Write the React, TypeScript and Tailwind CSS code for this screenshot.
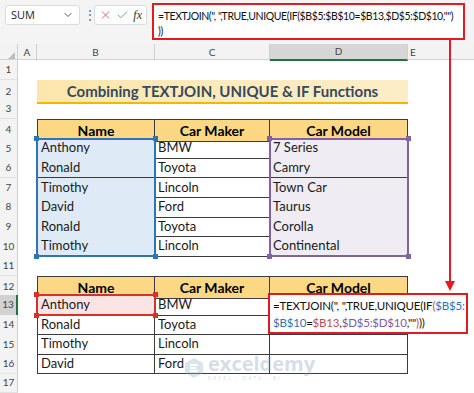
import { ChevronDown, X, Check } from "lucide-react";

const cols = "grid grid-cols-[18px_19px_118px_115px_138px_1fr]";
const cellFont = { fontFamily: "Lato, 'Open Sans', sans-serif" };

const table1 = [
  ["Anthony", "BMW", "7 Series"],
  ["Ronald", "Toyota", "Camry"],
  ["Timothy", "Lincoln", "Town Car"],
  ["David", "Ford", "Taurus"],
  ["Ronald", "Toyota", "Corolla"],
  ["Timothy", "Lincoln", "Continental"],
];

const table2 = [
  ["Anthony", "BMW"],
  ["Ronald", "Toyota"],
  ["Timothy", "Lincoln"],
  ["David", "Ford"],
];

const RowNum = ({ n, active }: { n: number; active?: boolean }) => (
  <div
    className={
      "flex items-center justify-center border-b border-[#e2e2e2] text-[10px] text-[#444] " +
      (active ? "bg-[#d2d2d2] border-r-2 border-r-[#217346]" : "bg-[#f3f3f3] border-r border-r-[#d0d0d0]")
    }
  >
    {n}
  </div>
);

const Handle = ({ cls, color }: { cls: string; color: string }) => (
  <div className={"absolute w-[5px] h-[5px] " + cls} style={{ background: color }} />
);

const Selection = ({ color, cls }: { color: string; cls: string }) => (
  <div className={"absolute pointer-events-none border-2 " + cls} style={{ borderColor: color }}>
    <Handle cls="-left-[4px] -top-[4px]" color={color} />
    <Handle cls="-right-[4px] -top-[4px]" color={color} />
    <Handle cls="-left-[4px] -bottom-[4px]" color={color} />
    <Handle cls="-right-[4px] -bottom-[4px]" color={color} />
  </div>
);

const HeaderRow = ({ n }: { n: number }) => (
  <div className={cols + " h-[19.6px]"}>
    <RowNum n={n} />
    <div />
    <div className="flex items-center justify-center bg-[#fcd884] border border-[#3b3b3b] text-[14px] font-bold text-black">Name</div>
    <div className="flex items-center justify-center bg-[#fcd884] border-y border-r border-[#3b3b3b] text-[14px] font-bold text-black">Car Maker</div>
    <div className="flex items-center justify-center bg-[#fcd884] border-y border-r border-[#3b3b3b] text-[14px] font-bold text-black">Car Model</div>
    <div />
  </div>
);

const EmptyRow = ({ n }: { n: number }) => (
  <div className={cols + " h-[19.6px]"}>
    <RowNum n={n} />
  </div>
);

export default function App() {
  return (
    <div className="w-[474px] h-[393px] overflow-hidden bg-white relative" style={cellFont}>
      {/* formula bar */}
      <div className="h-[44px] bg-[#f4f4f4] flex items-start pt-[3px] pl-[5px] gap-[4px]" style={{ fontFamily: "'Open Sans', 'Noto Sans', sans-serif" }}>
        <div className="mt-[2px] w-[75px] h-[20px] bg-white border border-[#dcdcdc] rounded-[3px] flex items-center justify-between px-[5px]">
          <span className="text-[11px] text-[#222]">SUM</span>
          <ChevronDown size={12} className="text-[#555]" />
        </div>
        <div className="mt-[6px] text-[12px] leading-none text-[#666] w-[6px] text-center">⋮</div>
        <div className="mt-[2px] w-[53px] h-[20px] bg-white border border-[#dcdcdc] rounded-[3px] flex items-center gap-[4px] px-[4px]">
          <X size={14} strokeWidth={1.5} className="text-[#e04848]" />
          <Check size={14} strokeWidth={1.5} className="text-[#3aa35a]" />
          <span className="text-[12px] italic text-[#333]" style={{ fontFamily: "'Liberation Serif', serif" }}>fx</span>
        </div>
        <div className="ml-[1px] w-[313px] h-[37px] bg-white border-2 border-[#e01b24] pl-[4px] pt-[4px] text-[10.5px] tracking-[-0.4px] leading-[15px] text-[#111] whitespace-nowrap overflow-hidden" style={{ fontFamily: "Lato, sans-serif" }}>
          <div>=TEXTJOIN(", ",TRUE,UNIQUE(IF($B$5:$B$10=$B13,$D$5:$D$10,"")</div>
          <div>))</div>
        </div>
      </div>

      {/* column headers */}
      <div className={cols + " h-[16px] bg-[#f3f3f3] border-b border-[#d0d0d0] text-[10px] text-[#444]"}>
        <div className="flex items-end justify-end pr-[2px] pb-[2px] border-r border-[#d0d0d0]">
          <div className="w-0 h-0 border-l-[7px] border-l-transparent border-b-[7px] border-b-[#bdbdbd]" />
        </div>
        <div className="flex items-center justify-center border-r border-[#d0d0d0]">A</div>
        <div className="flex items-center justify-center border-r border-[#d0d0d0]">B</div>
        <div className="flex items-center justify-center border-r border-[#d0d0d0]">C</div>
        <div className="flex items-center justify-center bg-[#d6d6d6] border-b-2 border-[#217346] border-r border-r-[#d0d0d0]">D</div>
        <div className="flex items-center pl-[2px]">E</div>
      </div>

      <div className="relative">
        <EmptyRow n={1} />
        <div className={cols + " h-[19.6px]"}>
          <RowNum n={2} />
          <div />
          <div className="col-span-3 flex items-center justify-center bg-gradient-to-r from-[#fde6aa] via-[#fdebbd] to-[#fdedc6] border-b-2 border-[#f2b800] text-[15px] font-bold text-[#36495d]">
            Combining TEXTJOIN, UNIQUE &amp; IF Functions
          </div>
        </div>
        <EmptyRow n={3} />
        <HeaderRow n={4} />
        {table1.map((r, i) => (
          <div key={i} className={cols + " h-[19.6px] text-[13px] text-[#1a1a1a]"}>
            <RowNum n={5 + i} />
            <div />
            <div className="flex items-center pl-[3px] bg-[#deebf7] border-x border-b border-[#3b3b3b]">{r[0]}</div>
            <div className="flex items-center pl-[3px] border-r border-b border-[#3b3b3b]">{r[1]}</div>
            <div className="flex items-center pl-[3px] bg-[#efecf4] border-r border-b border-[#3b3b3b]">{r[2]}</div>
            <div />
          </div>
        ))}
        <EmptyRow n={11} />
        <HeaderRow n={12} />
        {table2.map((r, i) => (
          <div key={i} className={cols + " h-[19.6px] text-[13px] text-[#1a1a1a]"}>
            <RowNum n={13 + i} active={i === 0} />
            <div />
            <div className={"flex items-center pl-[3px] border-x border-b border-[#3b3b3b] " + (i === 0 ? "bg-[#fbe4e4]" : "")}>{r[0]}</div>
            <div className="flex items-center pl-[3px] border-r border-b border-[#3b3b3b]">{r[1]}</div>
            <div className="border-r border-b border-[#3b3b3b]" />
            <div />
          </div>
        ))}
        <EmptyRow n={17} />

        {/* selections */}
        <Selection color="#2e75b6" cls="left-[36px] top-[77.5px] w-[120px] h-[119.5px]" />
        <Selection color="#8064a2" cls="left-[269px] top-[77.5px] w-[140px] h-[119.5px]" />
        <Selection color="#d9302c" cls="left-[36px] top-[234px] w-[120px] h-[21.6px]" />

        {/* formula in D13 */}
        <div className="absolute left-[268px] top-[233px] w-[200px] h-[41px] bg-white border-2 border-[#e01b24] pl-[3px] pt-[2px] text-[11.5px] tracking-[-0.2px] leading-[17px] text-[#111] whitespace-nowrap overflow-hidden">
          <div>
            =TEXTJOIN(", ",TRUE,UNIQUE(IF<span className="text-[#c0504d]">(</span>
            <span className="text-[#2e75b6]">$B$5:</span>
          </div>
          <div>
            <span className="text-[#2e75b6]">$B$10</span>=<span className="text-[#c0504d]">$B13</span>,<span className="text-[#7a5ca8]">$D$5:$D$10</span>,""<span className="text-[#c0504d]">)</span>))
          </div>
        </div>

        {/* watermark */}
        <div className="absolute left-[183px] top-[295px] flex items-center gap-[3px] opacity-35 pointer-events-none">
          <svg width="22" height="22" viewBox="0 0 22 22">
            <path d="M11 1 L20 6 L20 16 L11 21 L2 16 L2 6 Z" fill="#9bb0c8" />
            <path d="M7 8 L15 8 M7 11 L13 11 M7 14 L15 14" stroke="white" strokeWidth="2" />
          </svg>
          <div className="flex flex-col gap-[3px]">
            <span className="text-[20px] leading-[18px] font-bold text-[#8aa2bf]" style={{ fontFamily: "'Open Sans', sans-serif" }}>exceldemy</span>
            <span className="text-[5px] leading-[5px] tracking-[2px] text-[#8aa2bf]">EXCEL · DATA · BI</span>
          </div>
        </div>
      </div>

      {/* arrow */}
      <div className="absolute left-[449px] top-[40px] w-[2px] h-[243px] bg-[#e01b24]" />
      <div className="absolute left-[445px] top-[281px] w-0 h-0 border-l-[5px] border-l-transparent border-r-[5px] border-r-transparent border-t-[10px] border-t-[#e01b24]" />
    </div>
  );
}
